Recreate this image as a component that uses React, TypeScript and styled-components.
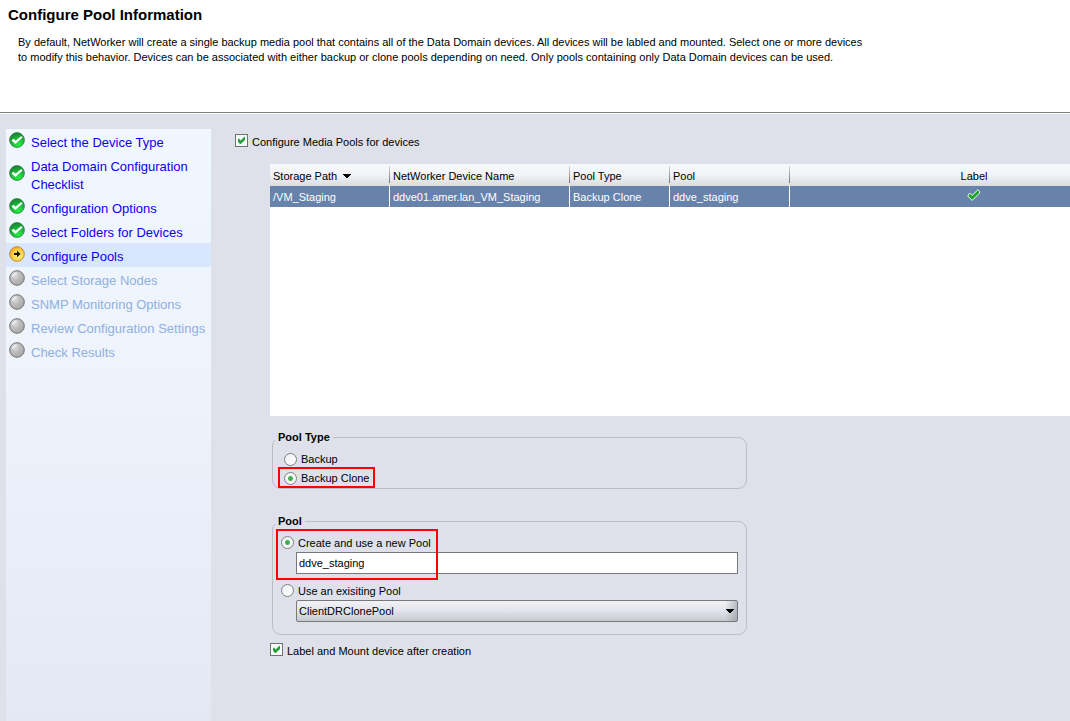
import React from 'react';
import styled, { createGlobalStyle, css } from 'styled-components';

const GlobalStyle = createGlobalStyle`
  * { box-sizing: border-box; }
  body {
    margin: 0;
    background: #dfe1ea;
    color: #000;
    font-family: "Liberation Sans", Arial, sans-serif;
    font-size: 11px;
    line-height: 15px;
  }
`;

const Page = styled.div`
  display: flex;
  flex-direction: column;
  min-height: 100vh;
  overflow: hidden;
`;

const Header = styled.header`
  min-height: 114px;
  padding: 7px 8px;
  background: #fff;
  border-bottom: 1px solid #fff;
  box-shadow: inset 0 -1px 0 #808080;
`;

const Title = styled.h1`
  margin: 0;
  font-size: 15px;
  line-height: 16px;
`;

const Description = styled.p`
  max-width: 860px;
  margin: 12px 0 0;
  padding-left: 10px;
`;

const Body = styled.div`
  flex: 1;
  display: grid;
  grid-template-columns: 205px minmax(0, 1fr);
  gap: 24px;
  padding: 15px 0 0 6px;
`;

const Sidebar = styled.nav`
  background: linear-gradient(#f0f7ff, #eef3fc 40%, #e4e8f3);
`;

const StepList = styled.ol`
  margin: 0;
  padding: 0;
  list-style: none;
`;

type StepState = 'done' | 'current' | 'pending';

const Step = styled.li<{ $state: StepState }>`
  display: flex;
  align-items: center;
  gap: 6px;
  padding: 5px 3px 1px;
  background: ${p => (p.$state === 'current' ? '#d8e7fd' : 'transparent')};
`;

const StepLink = styled.a<{ $state: StepState }>`
  color: ${p => (p.$state === 'pending' ? '#8fb0e0' : '#0f00f0')};
  font-size: 13px;
  line-height: 18px;
  text-decoration: none;
`;

const StepSvg = styled.svg`
  flex: none;
  display: block;
  margin: -2px 0 4px;
`;

const Main = styled.main`
  padding: 5px 0 24px;
`;

const Indented = styled.div`
  padding-left: 35px;
`;

const CheckLabel = styled.label`
  display: flex;
  align-items: center;
  width: max-content;
  gap: 4px;
`;

const Checkbox = styled.input.attrs({ type: 'checkbox' })`
  appearance: none;
  width: 13px;
  height: 13px;
  margin: 0;
  border: 1px solid #707070;
  background: #f8f9fb;
`;

const BoxWrap = styled.span`
  display: grid;
  padding-bottom: 4px;
  > * { grid-area: 1 / 1; }
`;

const BoxTick = styled.svg`
  z-index: 1;
  pointer-events: none;
`;

const TablePane = styled.div`
  height: 252px;
  margin-top: 13px;
  margin-bottom: 14px;
  overflow: hidden;
  background: #fff;
`;

const DeviceTable = styled.table`
  width: 888px;
  table-layout: fixed;
  border-collapse: separate;
  border-spacing: 0;
  text-align: left;
`;

const HeadRow = styled.tr`
  height: 22px;
  background: linear-gradient(#f7f9fd, #f1f3f6 50%, #d9dcdd);
`;

const SelectedRow = styled.tr`
  height: 21px;
  background: #6782ab;
  color: #fff;
`;

const cell = css<{ $center?: boolean; $last?: boolean }>`
  padding: 2px 3px 0;
  text-align: ${p => (p.$center ? 'center' : 'left')};
`;

const Th = styled.th<{ $center?: boolean; $last?: boolean }>`
  ${cell}
  font-weight: normal;
  background: ${p =>
    p.$last
      ? 'none'
      : 'linear-gradient(#d5d7dc, #6c7078) right 0 top 2px / 1px 17px no-repeat'};
`;

const Td = styled.td<{ $center?: boolean; $last?: boolean }>`
  ${cell}
  border-right: ${p => (p.$last ? '0' : '1px solid #fff')};
`;

const SortArrow = styled.svg`
  margin-left: 6px;
  vertical-align: 2px;
`;

const LabelTick = styled.svg`
  display: block;
  margin: -5px auto 0;
`;

const Group = styled.fieldset<{ $inset: number; $bottom: number }>`
  max-width: 475px;
  min-width: 0;
  margin: 0 0 25px 2px;
  padding: 6px 8px ${p => p.$bottom}px ${p => p.$inset}px;
  border: 1px solid #bcbdc0;
  border-radius: 9px;

  &:last-of-type {
    margin-bottom: 8px;
  }
`;

const Legend = styled.legend<{ $inset: number }>`
  margin-left: ${p => 2 - p.$inset}px;
  padding: 0 3px;
  font-weight: bold;
  line-height: 14px;
`;

const RadioLabel = styled.label<{ $tall?: boolean }>`
  display: flex;
  align-items: center;
  gap: 4px;
  width: max-content;
  height: ${p => (p.$tall ? 19 : 18)}px;
`;

const Radio = styled.input.attrs({ type: 'radio' })`
  appearance: none;
  width: 13px;
  height: 13px;
  margin: 0 0 1px;
  border: 1px solid #808080;
  border-radius: 50%;
  background: linear-gradient(135deg, #eef0f4, #fff);
  &:checked {
    background:
      radial-gradient(circle, #35ad46 0, #45b455 2px, rgba(90, 190, 100, 0) 3px),
      #f5f6f9;
  }
`;

const Marked = styled.div`
  position: relative;
`;

const MarkFrame = styled.span<{ $t: number; $b: number; $l: number; $w: number }>`
  position: absolute;
  top: ${p => -p.$t}px;
  bottom: ${p => -p.$b}px;
  left: ${p => -p.$l}px;
  width: ${p => p.$w}px;
  border: 2px solid #fe0000;
  pointer-events: none;
`;

const fieldBox = css`
  display: block;
  width: 100%;
  height: 22px;
  border: 1px solid #77797d;
  color: #000;
  font: inherit;
`;

const FieldRow = styled.div`
  position: relative;
  margin-left: 15px;
`;

const TextField = styled.input`
  ${fieldBox}
  padding: 0 2px;
  background: #fff;
`;

const Select = styled.select`
  ${fieldBox}
  appearance: none;
  padding: 0 20px 0 2px;
  border-radius: 2px;
  background:
    linear-gradient(to left, rgba(130, 136, 146, 0.5), rgba(130, 136, 146, 0) 12px),
    linear-gradient(#f3f3f5, #e1e4ec 50%, #c6c9cd);
`;

const SelectArrow = styled.svg`
  position: absolute;
  right: 4px;
  top: 9px;
  pointer-events: none;
`;

const Spacer = styled.div`
  margin-top: 8px;
`;

const Triangle = () => <path d="M0 0H8V1H7V2H6V3H5V4H3V3H2V2H1V1H0Z" fill="#000" />;

const StepIcon = ({ state }: { state: StepState }) => (
  <StepSvg width="16" height="16" viewBox="0 0 16 16" aria-hidden="true">
    <defs>
      <radialGradient id="green" cx="0.6" cy="0.85" r="0.85">
        <stop offset="0" stopColor="#22f040" />
        <stop offset="0.45" stopColor="#1cc438" />
        <stop offset="1" stopColor="#178033" />
      </radialGradient>
      <radialGradient id="gold" cx="0.6" cy="0.65" r="0.7">
        <stop offset="0" stopColor="#fff27a" />
        <stop offset="0.6" stopColor="#fbd046" />
        <stop offset="1" stopColor="#ee9d20" />
      </radialGradient>
      <radialGradient id="silver" cx="0.35" cy="0.3" r="0.8">
        <stop offset="0" stopColor="#e2e2e2" />
        <stop offset="0.45" stopColor="#bcbcbc" />
        <stop offset="1" stopColor="#a4a4a4" />
      </radialGradient>
    </defs>
    {state === 'done' && (
      <>
        <circle cx="8" cy="8" r="7.4" fill="url(#green)" stroke="#2a7f43" strokeWidth="0.8" />
        <path d="M2.4 8.6L4.6 6.8L6.6 8.8L12.2 4L13.6 5.6L6.4 12Z" fill="#fff" />
      </>
    )}
    {state === 'current' && (
      <>
        <circle cx="8" cy="8" r="7.3" fill="url(#gold)" stroke="#c98a2b" />
        <path d="M5 7H8V4.8L11.6 8L8 11.2V9H5Z" fill="#1a1400" />
      </>
    )}
    {state === 'pending' && (
      <>
        <circle cx="8" cy="8" r="7.3" fill="url(#silver)" stroke="#737373" />
        <path d="M3.6 7A4.6 4.6 0 0 1 8 3.2" fill="none" stroke="#efefef" strokeWidth="1.2" />
      </>
    )}
  </StepSvg>
);

const Check = ({ children }: { children: React.ReactNode }) => (
  <CheckLabel>
    <BoxWrap>
      <Checkbox defaultChecked />
      <BoxTick width="13" height="13" viewBox="0 0 13 13" aria-hidden="true">
        <path d="M3 5L4 4.6L5.6 6.6L9.4 2.8L10 3V6L5.8 10H5L3 8Z" fill="#27a03b" />
      </BoxTick>
    </BoxWrap>
    {children}
  </CheckLabel>
);

const steps: { name: string; state: StepState }[] = [
  { name: 'Select the Device Type', state: 'done' },
  { name: 'Data Domain Configuration Checklist', state: 'done' },
  { name: 'Configuration Options', state: 'done' },
  { name: 'Select Folders for Devices', state: 'done' },
  { name: 'Configure Pools', state: 'current' },
  { name: 'Select Storage Nodes', state: 'pending' },
  { name: 'SNMP Monitoring Options', state: 'pending' },
  { name: 'Review Configuration Settings', state: 'pending' },
  { name: 'Check Results', state: 'pending' },
];

export default function App() {
  return (
    <Page>
      <GlobalStyle />
      <Header>
        <Title>Configure Pool Information</Title>
        <Description>
          By default, NetWorker will create a single backup media pool that contains all of the
          Data Domain devices. All devices will be labled and mounted. Select one or more devices
          <br />
          to modify this behavior. Devices can be associated with either backup or clone pools
          depending on need. Only pools containing only Data Domain devices can be used.
        </Description>
      </Header>
      <Body>
        <Sidebar aria-label="Wizard steps">
          <StepList>
            {steps.map(s => (
              <Step key={s.name} $state={s.state}>
                <StepIcon state={s.state} />
                <StepLink href="#" $state={s.state}>{s.name}</StepLink>
              </Step>
            ))}
          </StepList>
        </Sidebar>
        <Main>
          <Check>Configure Media Pools for devices</Check>
          <Indented>
            <TablePane>
              <DeviceTable>
                <colgroup>
                  <col width="120" />
                  <col width="180" />
                  <col width="100" />
                  <col width="120" />
                  <col />
                </colgroup>
                <thead>
                  <HeadRow>
                    <Th>
                      Storage Path
                      <SortArrow width="8" height="4" aria-hidden="true"><Triangle /></SortArrow>
                    </Th>
                    <Th>NetWorker Device Name</Th>
                    <Th>Pool Type</Th>
                    <Th>Pool</Th>
                    <Th $center $last>Label</Th>
                  </HeadRow>
                </thead>
                <tbody>
                  <SelectedRow>
                    <Td>/VM_Staging</Td>
                    <Td>ddve01.amer.lan_VM_Staging</Td>
                    <Td>Backup Clone</Td>
                    <Td>ddve_staging</Td>
                    <Td $center $last>
                      <LabelTick width="14" height="12" viewBox="0 0 14 12" role="img" aria-label="Yes">
                        <path
                          d="M1 6L3 4.2L5.2 6.4L10.8 0.8L12.6 2.4V4.2L5.6 11H4.8L1 7.4Z"
                          fill="#1ea32b"
                          stroke="#f4fff4"
                        />
                      </LabelTick>
                    </Td>
                  </SelectedRow>
                </tbody>
              </DeviceTable>
            </TablePane>
            <Group $inset={11} $bottom={0}>
              <Legend $inset={11}>Pool Type</Legend>
              <RadioLabel $tall>
                <Radio name="poolType" />
                Backup
              </RadioLabel>
              <Marked>
                <RadioLabel $tall>
                  <Radio name="poolType" defaultChecked />
                  Backup Clone
                </RadioLabel>
                <MarkFrame $t={2} $b={0} $l={6} $w={97} />
              </Marked>
            </Group>
            <Group $inset={8} $bottom={12}>
              <Legend $inset={8}>Pool</Legend>
              <Marked>
                <RadioLabel>
                  <Radio name="pool" defaultChecked />
                  Create and use a new Pool
                </RadioLabel>
                <FieldRow>
                  <TextField aria-label="New pool name" defaultValue="ddve_staging" />
                </FieldRow>
                <MarkFrame $t={5} $b={6} $l={5} $w={162} />
              </Marked>
              <Spacer>
                <RadioLabel>
                  <Radio name="pool" />
                  Use an exisiting Pool
                </RadioLabel>
                <FieldRow>
                  <Select aria-label="Existing pool">
                    <option>ClientDRClonePool</option>
                  </Select>
                  <SelectArrow width="8" height="4" aria-hidden="true"><Triangle /></SelectArrow>
                </FieldRow>
              </Spacer>
            </Group>
            <Check>Label and Mount device after creation</Check>
          </Indented>
        </Main>
      </Body>
    </Page>
  );
}
